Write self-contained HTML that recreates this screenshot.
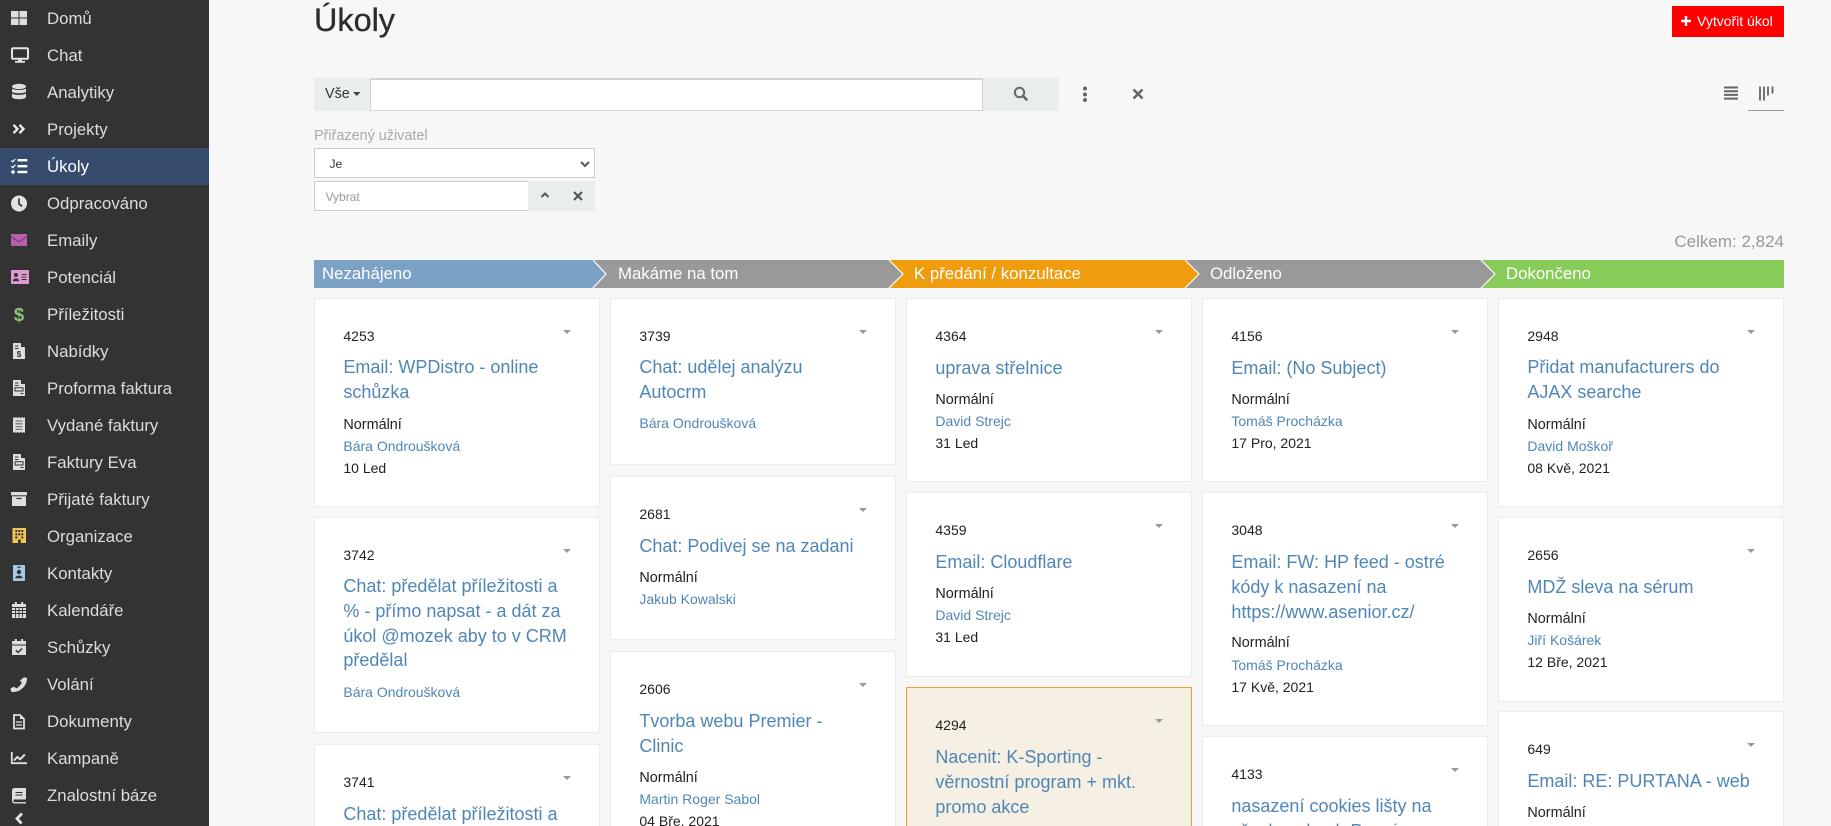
<!DOCTYPE html>
<html lang="cs">
<head>
<meta charset="utf-8">
<title>Úkoly</title>
<style>
html,body{margin:0;padding:0;width:1831px;height:826px;overflow:hidden;background:#f7f7f7;font-family:"Liberation Sans",sans-serif;}
*{box-sizing:border-box;}
#root{position:relative;width:1831px;height:826px;overflow:hidden;background:#f7f7f7;}
.abs{position:absolute;}
#side{left:0;top:0;width:209px;height:826px;background:#333;}
#act{left:0;top:148px;width:209px;height:37px;background:#374b6f;}
.mi{position:absolute;left:47px;font-size:16.8px;line-height:24px;color:#dcdcdc;white-space:nowrap;margin-top:1px;}
.mi.a{color:#fff;}
svg{position:absolute;overflow:visible;}
h1{position:absolute;left:314px;top:0;margin:0;font-size:32.4px;line-height:40px;font-weight:400;color:#2c2c2c;-webkit-text-stroke:.3px #2c2c2c;}
.btn{left:1672px;top:6px;width:112px;height:31px;background:#f00;color:#fff;font-size:14px;line-height:30px;white-space:nowrap;}
.btn span{position:absolute;left:25px;top:0;}
.st{position:absolute;top:260px;height:28px;line-height:28px;color:#fff;font-size:16.8px;white-space:nowrap;}
.card{position:absolute;width:286px;background:#fff;border:1px solid #ececec;padding:28px 24px 0 28.4px;font-size:14px;color:#222;overflow:hidden;}
.card.e{border-bottom:0;}
.card.o{background:#f6efe3;border-color:#f0a030;}
.id{line-height:20px;height:20px;margin-top:-1px;}
.t{margin-top:9px;margin-bottom:10px;font-size:18px;line-height:24.8px;color:#5086b6;}
.t.u{margin-top:10px;margin-bottom:9px;}
.l{line-height:21.6px;height:21.6px;white-space:nowrap;}
.l.x{margin-top:-1.5px;}
.n{font-size:14.4px;}
.b{color:#5086b6;}
.car{position:absolute;right:28px;top:31px;width:0;height:0;border-left:4.5px solid transparent;border-right:4.5px solid transparent;border-top:4.5px solid #999;}
</style>
</head>
<body>
<div id="root">
<div id="side" class="abs"></div>
<div id="act" class="abs"></div>
<div class="mi" style="top:6px">Domů</div>
<div class="mi" style="top:43px">Chat</div>
<div class="mi" style="top:80px">Analytiky</div>
<div class="mi" style="top:117px">Projekty</div>
<div class="mi a" style="top:154px">Úkoly</div>
<div class="mi" style="top:191px">Odpracováno</div>
<div class="mi" style="top:228px">Emaily</div>
<div class="mi" style="top:265px">Potenciál</div>
<div class="mi" style="top:302px">Příležitosti</div>
<div class="mi" style="top:339px">Nabídky</div>
<div class="mi" style="top:376px">Proforma faktura</div>
<div class="mi" style="top:413px">Vydané faktury</div>
<div class="mi" style="top:450px">Faktury Eva</div>
<div class="mi" style="top:487px">Přijaté faktury</div>
<div class="mi" style="top:524px">Organizace</div>
<div class="mi" style="top:561px">Kontakty</div>
<div class="mi" style="top:598px">Kalendáře</div>
<div class="mi" style="top:635px">Schůzky</div>
<div class="mi" style="top:672px">Volání</div>
<div class="mi" style="top:709px">Dokumenty</div>
<div class="mi" style="top:746px">Kampaně</div>
<div class="mi" style="top:783px">Znalostní báze</div>

<svg width="209" height="826" style="left:0;top:0" viewBox="0 0 209 826">
<g fill="#dedede">
<!-- Domů -->
<rect x="11" y="11" width="7.500" height="6.500"/><rect x="19.500" y="11" width="7.500" height="6.500"/><rect x="11" y="18.500" width="7.500" height="6.500"/><rect x="19.500" y="18.500" width="7.500" height="6.500"/>
<!-- Chat -->
<rect x="12" y="48.200" width="16" height="10.600" rx="1" fill="none" stroke="#e6e6e6" stroke-width="2"/><rect x="18" y="59" width="4" height="2.500"/><rect x="15" y="61" width="10" height="1.800"/>
<!-- Analytiky -->
<ellipse cx="19" cy="86.500" rx="7" ry="2.700"/><path d="M12 88.500c1.500 2 12.500 2 14 0v3.200c-1.500 2-12.500 2-14 0z"/><path d="M12 93.400c1.500 2 12.500 2 14 0v3.800c-1.500 2.700-12.500 2.700-14 0z"/>
<!-- Projekty -->
<path d="M13.500 124.800l4 4.200-4 4.200M19.500 124.800l4 4.200-4 4.200" fill="none" stroke="#e8e8e8" stroke-width="2.400"/>
<!-- Úkoly -->
<g fill="#fff"><rect x="17.500" y="159" width="9.800" height="2.400"/><rect x="17.500" y="165" width="9.800" height="2.400"/><rect x="17.500" y="170.800" width="9.800" height="2.400"/><circle cx="13" cy="172" r="1.700"/></g>
<path d="M11.300 160.400l1.400 1.400 2.600-2.800M11.300 166.200l1.400 1.400 2.600-2.800" fill="none" stroke="#fff" stroke-width="1.200"/>
<!-- Odpracováno -->
<circle cx="19" cy="203.500" r="8" fill="#e2e2e2"/><path d="M19 198.500v5.500l3.200 2.300" fill="none" stroke="#333" stroke-width="1.700"/>
<!-- Emaily -->
<rect x="11" y="234" width="16" height="12" fill="#b85fae"/><path d="M11 236.500l8 5.500 8-5.500" fill="none" stroke="#6e3a68" stroke-width="1"/>
<!-- Potenciál -->
<rect x="11" y="270" width="18" height="14" rx="1" fill="#dd9bcf"/><circle cx="16" cy="275" r="2" fill="#333"/><path d="M12.800 281.200c0-3.600 6.400-3.600 6.400 0z" fill="#333"/><path d="M21.500 274.500h5M21.500 277h5M21.500 279.500h5" stroke="#333" stroke-width="1.100"/>
<!-- Nabídky -->
<path d="M13 343h7.500l4.500 4.500V359H13z"/><path d="M21 343.200l3.800 3.800H21z" fill="#333"/><path d="M15 346h3.500M15 348.500h3.500" stroke="#333" stroke-width="1"/>
<text x="19" y="357" font-size="8" font-weight="700" text-anchor="middle" fill="#333" font-family="Liberation Sans">$</text>
<!-- Proforma -->
<path d="M13 380h7.500l4.500 4.500V396H13z"/><path d="M21 380.200l3.800 3.800H21z" fill="#333"/><path d="M15 383h3.500M15 385.500h3.500M20.500 393.500h3M15 387.800h8v3.200h-8z" fill="none" stroke="#333" stroke-width="1"/>
<!-- Vydané -->
<path d="M13 417l1.500 1 1.500-1 1.500 1 1.500-1 1.500 1 1.500-1 1.500 1 1.500-1v16l-1.500-1-1.500 1-1.500-1-1.500 1-1.500-1-1.500 1-1.500-1-1.500 1z"/><path d="M15.500 421h7M15.500 423.800h7M15.500 426.600h7M15.500 429.400h7" stroke="#777" stroke-width="1.300"/>
<!-- Faktury Eva -->
<path d="M13 454h7.500l4.500 4.500V470H13z"/><path d="M21 454.200l3.800 3.800H21z" fill="#333"/><path d="M15 457h3.500M15 459.500h3.500M20.500 467.500h3M15 461.800h8v3.200h-8z" fill="none" stroke="#333" stroke-width="1"/>
<!-- Přijaté -->
<rect x="11" y="492" width="16" height="3.300"/><path d="M12 496.300h14V506H12z"/><path d="M16.500 498.500h5" stroke="#333" stroke-width="1.200"/>
<!-- Kalendáře -->
<path d="M12 604h14v14H12z"/><rect x="14.800" y="602" width="2" height="3"/><rect x="21.200" y="602" width="2" height="3"/><path d="M12 607.500h14M12 610.500h14M12 613.500h14M15.500 607.500v10M19 607.500v10M22.500 607.500v10" stroke="#333" stroke-width=".9"/>
<!-- Schůzky -->
<path d="M12 641h14v3.500H12zM12 645.500h14V655H12z"/><rect x="14.800" y="639" width="2" height="3"/><rect x="21.200" y="639" width="2" height="3"/><path d="M15.800 650.300l2.300 2.200 4-4" fill="none" stroke="#333" stroke-width="1.500"/>
<!-- Volání -->
<path d="M24 677.200l3 .8c.3 7.500-6.500 14.300-14.500 14l-1.500-.5-.3-3.200 3.500-1.700 2 1.900c2.600-1.400 4.500-3.400 5.600-6l-2-1.700z"/>
<!-- Dokumenty -->
<path d="M14 715h6l4 4v9.500H14z" fill="none" stroke="#e0e0e0" stroke-width="1.800"/><path d="M20 714.500v4.500h4.500" fill="#e0e0e0"/><path d="M16 722h6M16 725h6" stroke="#e0e0e0" stroke-width="1.200"/>
<!-- Kampaně -->
<path d="M11.800 752v11.200H27" fill="none" stroke="#e0e0e0" stroke-width="1.800"/><path d="M14 760.500l3.300-3.500 2.800 2.300 4.800-4.800" fill="none" stroke="#e0e0e0" stroke-width="2"/>
<!-- Znalostní -->
<path d="M12 790.500a2.500 2.500 0 0 1 2.500-2.500H26v11.500H14.500c-1.500 0-1.500 2.600 0 2.600H26v1.400H14.500a2.500 2.500 0 0 1-2.500-2.500z"/><path d="M15.500 792.500h7M15.500 795h7" stroke="#333" stroke-width="1.100"/>
</g>
<!-- Příležitosti -->
<text x="19" y="321" font-size="18.500" font-weight="700" text-anchor="middle" fill="#8fc276" font-family="Liberation Sans">$</text>
<!-- Organizace -->
<path d="M12.500 528h13.500v15H12.500z" fill="#f0c552"/><g fill="#333"><rect x="15.300" y="530" width="2" height="2"/><rect x="18.300" y="530" width="2" height="2"/><rect x="21.300" y="530" width="2" height="2"/><rect x="15.300" y="533.300" width="2" height="2"/><rect x="18.300" y="533.300" width="2" height="2"/><rect x="21.300" y="533.300" width="2" height="2"/><rect x="15.300" y="536.500" width="2" height="2"/><rect x="21.300" y="536.500" width="2" height="2"/><rect x="18" y="539.500" width="2.800" height="3.500"/></g>
<!-- Kontakty -->
<rect x="13" y="565" width="12" height="16" rx="1" fill="#a4cce8"/><circle cx="19" cy="572" r="2.200" fill="#333"/><path d="M15.300 578.200c0-3.500 7.400-3.500 7.400 0z" fill="#333"/><path d="M17 567.200h4" stroke="#333" stroke-width="1"/>
<!-- Collapse -->
<path d="M22 813.500l-5 5 4.500 5" fill="none" stroke="#e6e6e6" stroke-width="2.800"/>
</svg>

<h1>Úkoly</h1>
<div class="abs btn"><svg width="12" height="12" style="left:8px;top:9px"><path d="M6 1v10M1 6h10" stroke="#fff" stroke-width="2.400"/></svg><span>Vytvořit úkol</span></div>

<!-- Search bar -->
<div class="abs" style="left:314px;top:78px;width:56px;height:33px;background:#e9edee;color:#333;font-size:14.4px;line-height:32px;padding-left:11px">Vše<svg width="8" height="5" style="left:39px;top:14px"><path d="M0 0h7.500L3.750 4z" fill="#444"/></svg></div>
<div class="abs" style="left:370px;top:78px;width:613px;height:33px;background:#fff;border:1px solid #d4d4d4;border-top-width:2px"></div>
<div class="abs" style="left:983px;top:78px;width:76px;height:33px;background:#e9edee"></div>
<svg width="16" height="16" style="left:1013px;top:86px"><circle cx="6.500" cy="6.500" r="4.700" fill="none" stroke="#666" stroke-width="2"/><path d="M10 10l4.200 4.200" stroke="#666" stroke-width="2.600"/></svg>
<svg width="6" height="16" style="left:1082px;top:86px"><circle cx="3" cy="2.500" r="2" fill="#666"/><circle cx="3" cy="8.500" r="2" fill="#666"/><circle cx="3" cy="14" r="2" fill="#666"/></svg>
<svg width="12" height="12" style="left:1132px;top:88px"><path d="M1.500 1.500l9 9M10.500 1.500l-9 9" stroke="#666" stroke-width="2.600"/></svg>
<svg width="14" height="14" style="left:1724px;top:86px"><path d="M0 1.500h14M0 5.200h14M0 8.900h14M0 12.600h14" stroke="#666" stroke-width="2"/></svg>
<svg width="16" height="15" style="left:1759px;top:86px"><path d="M1 .5v14M5 .5v14M9 .5v9M13.500 .5v7" stroke="#666" stroke-width="1.800"/></svg>
<div class="abs" style="left:1748px;top:110px;width:36px;height:1px;background:#999"></div>

<!-- Filter -->
<div class="abs" style="left:314px;top:126px;font-size:14.400px;line-height:20px;color:#aaa;white-space:nowrap">Přiřazený uživatel</div>
<div class="abs" style="left:314px;top:148px;width:281px;height:30px;background:#fff;border:1px solid #ccc;font-size:12px;line-height:30px;padding-left:14.500px;color:#333">Je<svg width="10" height="7" style="left:265px;top:12px"><path d="M1 1l4 4 4-4" fill="none" stroke="#555" stroke-width="2"/></svg></div>
<div class="abs" style="left:314px;top:181px;width:215px;height:30px;background:#fff;border:1px solid #ccc;border-right:0;font-size:12px;line-height:30px;padding-left:10.500px;color:#999">Vybrat</div>
<div class="abs" style="left:528px;top:181px;width:67px;height:30px;background:#e9edee"></div>
<svg width="10" height="7" style="left:540px;top:192px"><path d="M1.500 5l3.500-3.500L8.500 5" fill="none" stroke="#555" stroke-width="2"/></svg>
<svg width="10" height="10" style="left:573px;top:191px"><path d="M1 1l8 8M9 1l-8 8" stroke="#555" stroke-width="2.200"/></svg>

<div class="abs" style="right:47px;top:230px;font-size:17px;line-height:24px;color:#999;white-space:nowrap">Celkem: 2,824</div>

<!-- Stage bar -->
<svg width="1470" height="28" style="left:314px;top:260px" viewBox="314 260 1470 28">
<polygon points="314,260 593,260 606,274 593,288 314,288" fill="#7ba2c5"/>
<polygon points="593,260 889,260 903,274 889,288 593,288 606,274" fill="#999"/>
<polygon points="889,260 1185,260 1199,274 1185,288 889,288 903,274" fill="#f09c0f"/>
<polygon points="1185,260 1481,260 1495,274 1481,288 1185,288 1199,274" fill="#999"/>
<polygon points="1481,260 1784,260 1784,288 1481,288 1495,274" fill="#87cb58"/>
<path d="M593,260 L606,274 L593,288 M889,260 L903,274 L889,288 M1185,260 L1199,274 L1185,288 M1481,260 L1495,274 L1481,288" fill="none" stroke="#fff" stroke-width="1.200"/>
</svg>
<div class="st" style="left:322px">Nezahájeno</div>
<div class="st" style="left:618px">Makáme na tom</div>
<div class="st" style="left:914px">K předání / konzultace</div>
<div class="st" style="left:1210px">Odloženo</div>
<div class="st" style="left:1506px">Dokončeno</div>

<!-- Column 1 -->
<div class="card" style="left:314px;top:298px;height:209px"><i class="car"></i><div class="id">4253</div><div class="t">Email: WPDistro - online schůzka</div><div class="l n">Normální</div><div class="l b">Bára Ondroušková</div><div class="l">10 Led</div></div>
<div class="card" style="left:314px;top:517px;height:216px"><i class="car"></i><div class="id">3742</div><div class="t">Chat: předělat příležitosti a % - přímo napsat - a dát za úkol @mozek aby to v CRM předělal</div><div class="l b x">Bára Ondroušková</div></div>
<div class="card e" style="left:314px;top:744px;height:82px"><i class="car"></i><div class="id">3741</div><div class="t u">Chat: předělat příležitosti a</div></div>

<!-- Column 2 -->
<div class="card" style="left:610px;top:298px;height:167px"><i class="car"></i><div class="id">3739</div><div class="t">Chat: udělej analýzu Autocrm</div><div class="l b x">Bára Ondroušková</div></div>
<div class="card" style="left:610px;top:476px;height:164px"><i class="car"></i><div class="id">2681</div><div class="t u">Chat: Podivej se na zadani</div><div class="l n">Normální</div><div class="l b">Jakub Kowalski</div></div>
<div class="card e" style="left:610px;top:651px;height:175px"><i class="car"></i><div class="id">2606</div><div class="t u">Tvorba webu Premier - Clinic</div><div class="l n">Normální</div><div class="l b">Martin Roger Sabol</div><div class="l">04 Bře, 2021</div></div>

<!-- Column 3 -->
<div class="card" style="left:906px;top:298px;height:184px"><i class="car"></i><div class="id">4364</div><div class="t u">uprava střelnice</div><div class="l n">Normální</div><div class="l b">David Strejc</div><div class="l">31 Led</div></div>
<div class="card" style="left:906px;top:492px;height:185px"><i class="car"></i><div class="id">4359</div><div class="t u">Email: Cloudflare</div><div class="l n">Normální</div><div class="l b">David Strejc</div><div class="l">31 Led</div></div>
<div class="card o e" style="left:906px;top:687px;height:139px"><i class="car"></i><div class="id">4294</div><div class="t u">Nacenit: K-Sporting - věrnostní program + mkt. promo akce</div></div>

<!-- Column 4 -->
<div class="card" style="left:1202px;top:298px;height:184px"><i class="car"></i><div class="id">4156</div><div class="t u">Email: (No Subject)</div><div class="l n">Normální</div><div class="l b">Tomáš Procházka</div><div class="l">17 Pro, 2021</div></div>
<div class="card" style="left:1202px;top:492px;height:234px"><i class="car"></i><div class="id">3048</div><div class="t u">Email: FW: HP feed - ostré kódy k nasazení na https://www.asenior.cz/</div><div class="l n">Normální</div><div class="l b">Tomáš Procházka</div><div class="l">17 Kvě, 2021</div></div>
<div class="card e" style="left:1202px;top:736px;height:90px"><i class="car"></i><div class="id">4133</div><div class="t u">nasazení cookies lišty na všech webech Premier</div></div>

<!-- Column 5 -->
<div class="card" style="left:1498px;top:298px;height:209px"><i class="car"></i><div class="id">2948</div><div class="t">Přidat manufacturers do AJAX searche</div><div class="l n">Normální</div><div class="l b">David Moškoř</div><div class="l">08 Kvě, 2021</div></div>
<div class="card" style="left:1498px;top:517px;height:185px"><i class="car"></i><div class="id">2656</div><div class="t u">MDŽ sleva na sérum</div><div class="l n">Normální</div><div class="l b">Jiří Košárek</div><div class="l">12 Bře, 2021</div></div>
<div class="card e" style="left:1498px;top:711px;height:115px"><i class="car"></i><div class="id">649</div><div class="t u">Email: RE: PURTANA - web</div><div class="l n">Normální</div></div>
</div>
</body>
</html>
